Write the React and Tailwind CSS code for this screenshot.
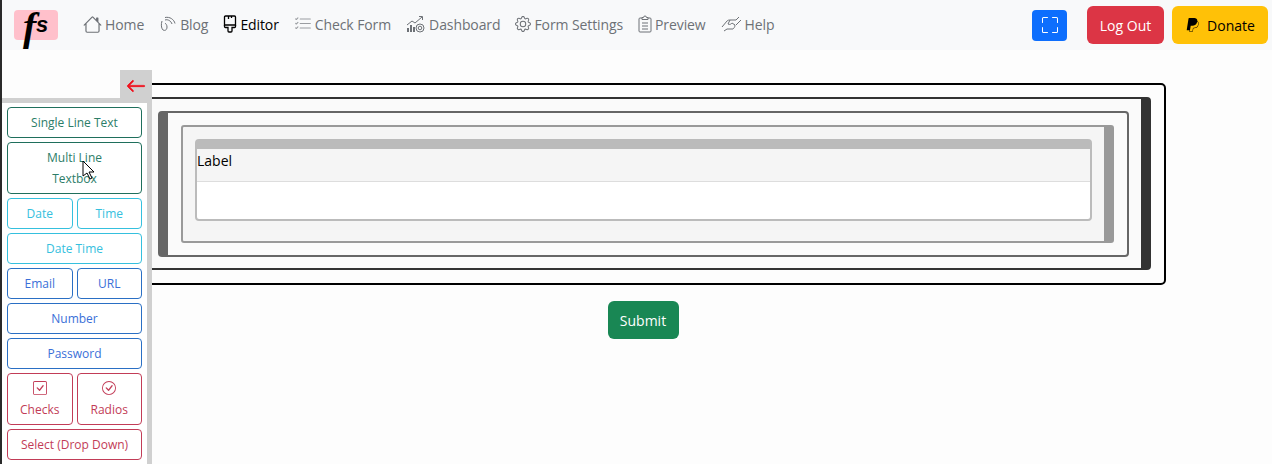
import React from 'react'
import { BsHouse, BsListCheck, BsGear, BsArrowLeft, BsPaypal, BsFullscreen, BsCheckSquare, BsCheckCircle } from 'react-icons/bs'

function Rss() {
  return (
    <svg className="w-[18px] h-[18px]" viewBox="0 0 18 18" fill="none" stroke="currentColor" strokeWidth="1">
      <path d="M3 6c-1 3-1 7 1 9 2 1 4 0 4-3 0-2-1-3-2-4" />
      <path d="M6 5c3-1 6 1 7 4" />
      <path d="M6 2.500c5-1 9 2 10 6" />
    </svg>
  )
}

function Brush() {
  return (
    <svg className="w-[14px] h-[18px]" viewBox="0 0 14 18" fill="none" stroke="currentColor" strokeWidth="1.300">
      <path d="M2.500 1h9a1 1 0 0 1 1 1v8h-11V2a1 1 0 0 1 1-1z" />
      <path d="M1.500 10v1.500a1 1 0 0 0 1 1H5v3.500a1 1 0 0 0 1 1h2a1 1 0 0 0 1-1v-3.500h2.500a1 1 0 0 0 1-1V10" />
      <path d="M5.500 1v3M8.500 1v2" />
    </svg>
  )
}

function DashIcon() {
  return (
    <svg className="w-[20px] h-[18px]" viewBox="0 0 20 18" fill="none" stroke="currentColor" strokeWidth="1">
      <path d="M1 10l5-4 3 2 7-6M13 1.500h3.500v3.500" />
      <path d="M2 17v-4M5 17v-7M8 17v-5" strokeWidth="2" />
      <circle cx="14" cy="13" r="4" />
      <circle cx="14" cy="13" r="1.800" />
    </svg>
  )
}

function ClipIcon() {
  return (
    <svg className="w-[14px] h-[18px]" viewBox="0 0 14 18" fill="none" stroke="currentColor" strokeWidth="1">
      <path d="M4 3H2a1 1 0 0 0-1 1v12a1 1 0 0 0 1 1h10a1 1 0 0 0 1-1V4a1 1 0 0 0-1-1h-2" />
      <path d="M4 4.500V2.500h1.500a1.500 1.500 0 0 1 3 0H10v2z" />
      <path d="M4 8h6M4 11h6M4 14h6" />
    </svg>
  )
}

function HandIcon() {
  return (
    <svg className="w-[21px] h-[18px]" viewBox="0 0 21 18" fill="none" stroke="currentColor" strokeWidth="1">
      <path d="M1 12l5-6c1-1 2-1 3-1h6l3-3" />
      <path d="M9 5L7 9c2 1 3 0 4-1l3 2c0 2-1 3-2 4H6l-3 2" />
      <path d="M15 10l5-5" />
    </svg>
  )
}

const navItems = [
  { label: 'Home', icon: <BsHouse size={19} /> },
  { label: 'Blog', icon: <Rss /> },
  { label: 'Editor', icon: <Brush />, active: true },
  { label: 'Check Form', icon: <BsListCheck size={18} className="text-[#9a9da1]" /> },
  { label: 'Dashboard', icon: <DashIcon /> },
  { label: 'Form Settings', icon: <BsGear size={16} /> },
  { label: 'Preview', icon: <ClipIcon /> },
  { label: 'Help', icon: <HandIcon /> },
]

function NavItem({ item }) {
  return (
    <a className={`flex items-center gap-[3px] text-[14px] tracking-[-0.1px] ${item.active ? 'text-black font-medium' : 'text-[#6d7176]'}`}>
      {item.icon}
      <span>{item.label}</span>
    </a>
  )
}

function ToolButton({ children, color, className = '' }) {
  return (
    <button className={`h-[31px] rounded-[4px] border text-[12px] bg-white ${color} ${className}`}>
      {children}
    </button>
  )
}

const green = 'border-[#1f6f5c] text-[#2c7d68]'
const cyan = 'border-[#35c0de] text-[#35c0de]'
const blue = 'border-[#2a6fc4] text-[#3a6fd8]'
const red = 'border-[#c23c57] text-[#c23c57]'

function Sidebar() {
  return (
    <div className="absolute left-0 top-[70px] w-[150px]">
      <div className="flex justify-end">
        <div className="w-[32px] h-[28px] bg-[#d0d0d0] flex items-center justify-center pt-[4px] text-[#f0101c]">
          <BsArrowLeft size={20} stroke="currentColor" strokeWidth={0.6} />
        </div>
      </div>
      <div className="h-[366px] bg-white border-t-[5px] border-r-[5px] border-[#d0d0d0] px-[5px] pt-[4px] flex flex-col gap-[4px]">
        <ToolButton color={green}>Single Line Text</ToolButton>
        <ToolButton color={green} className="h-[52px] px-6 leading-[21px]">Multi Line Textbox</ToolButton>
        <div className="grid grid-cols-2 gap-[4px]">
          <ToolButton color={cyan}>Date</ToolButton>
          <ToolButton color={cyan}>Time</ToolButton>
        </div>
        <ToolButton color={cyan}>Date Time</ToolButton>
        <div className="grid grid-cols-2 gap-[4px]">
          <ToolButton color={blue}>Email</ToolButton>
          <ToolButton color={blue}>URL</ToolButton>
        </div>
        <ToolButton color={blue}>Number</ToolButton>
        <ToolButton color={blue}>Password</ToolButton>
        <div className="grid grid-cols-2 gap-[4px]">
          <ToolButton color={red} className="h-[52px] flex flex-col items-center pt-[7px] gap-[6px]">
            <BsCheckSquare size={14} />
            <span>Checks</span>
          </ToolButton>
          <ToolButton color={red} className="h-[52px] flex flex-col items-center pt-[7px] gap-[6px]">
            <BsCheckCircle size={14} />
            <span>Radios</span>
          </ToolButton>
        </div>
        <ToolButton color={red}>Select (Drop Down)</ToolButton>
      </div>
    </div>
  )
}

export default function App() {
  return (
    <div className="relative h-[464px] overflow-hidden bg-[#fdfdfd] border-l-2 border-[#2a2a2a] font-['Open_Sans',sans-serif]">
      <nav className="h-[50px] bg-[#f8f9fa] flex items-center pl-[12px] pr-[4px]">
        <div className="relative w-[44px] h-[30px] bg-[#ffc0cb] rounded-[4px]">
          <span className="absolute left-[9px] top-[-6px] text-[40px] font-bold italic text-black leading-[46px] font-['Liberation_Serif',serif]">f</span>
          <span className="absolute left-[22px] top-[1px] text-[22px] font-bold italic text-black leading-[28px] font-['Liberation_Sans',sans-serif]">s</span>
        </div>
        <div className="flex items-center gap-[15px] ml-[25px] pb-[2px]">
          {navItems.map(item => <NavItem key={item.label} item={item} />)}
        </div>
        <button className="ml-auto w-[35px] h-[31px] rounded-[4px] bg-[#0d6efd] text-white flex items-center justify-center">
          <BsFullscreen size={16} />
        </button>
        <button className="ml-[20px] w-[77px] h-[38px] rounded-[6px] bg-[#dc3545] text-white text-[14px]">Log Out</button>
        <button className="ml-[8px] w-[96px] h-[38px] rounded-[6px] bg-[#ffc107] text-black text-[14px] flex items-center justify-center gap-[8px]">
          <BsPaypal size={14} />
          Donate
        </button>
      </nav>

      <main className="pl-[118px] pr-[106px] pt-[33px]">
        <div className="border-2 border-black rounded-[5px] h-[202px] pt-[12px]">
          <div className="ml-[18px] mr-[13px] h-[173px] border-y-2 border-x-[10px] border-[#333] rounded-[4px] pt-[12px] bg-[#fafafa]">
            <div className="ml-[8px] mr-[12px] h-[146px] border-y-2 border-r-2 border-l-[10px] border-[#666] rounded-[4px] pt-[12px] px-[13px]">
              <div className="h-[118px] border-y-2 border-l-2 border-r-[10px] border-[#999] rounded-[3px] bg-[#f5f5f5] pt-[12px] px-[12px]">
                <div className="h-[82px] border-2 border-t-[10px] border-[#bbb] rounded-[4px] bg-white">
                  <div className="h-[33px] pb-[9px] bg-[#f5f5f5] border-b border-[#ddd] text-[14px] text-black flex items-center">Label</div>
                </div>
              </div>
            </div>
          </div>
        </div>
        <div className="flex justify-center mt-[16px]">
          <button className="w-[71px] h-[38px] rounded-[6px] bg-[#198754] text-white text-[14px] font-medium">Submit</button>
        </div>
      </main>

      <Sidebar />

      {/* cursor over the tool panel */}
      <svg className="absolute left-[80px] top-[160px] w-[14px] h-[20px]" viewBox="0 0 14 20">
        <path d="M1 1v15l4-3 3 6 2-1-3-6h5z" fill="#fff" stroke="#000" strokeWidth="1" />
      </svg>
    </div>
  )
}
